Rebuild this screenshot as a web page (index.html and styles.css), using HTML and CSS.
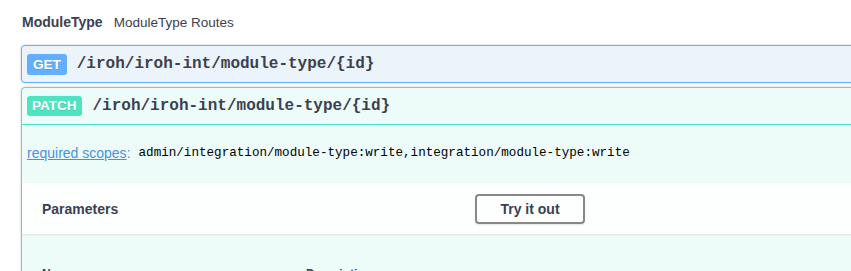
FILE: index.html
```html
<!DOCTYPE html>
<html>
<head>
<meta charset="utf-8">
<link rel="stylesheet" href="styles.css">
</head>
<body>
<div class="page">
  <h3 class="tag"><span class="tag-name">ModuleType</span><span class="tag-desc">ModuleType Routes</span></h3>
  <div class="opblock opblock-get">
    <div class="summary">
      <span class="method">GET</span>
      <span class="path">/iroh/iroh-int/module-type/{id}</span>
    </div>
  </div>
  <div class="opblock opblock-patch">
    <div class="summary summary-open">
      <span class="method">PATCH</span>
      <span class="path">/iroh/iroh-int/module-type/{id}</span>
    </div>
    <div class="scopes">
      <a class="scopes-link" href="#">required scopes</a><span class="colon">:</span>
      <code class="scopes-list">admin/integration/module-type:write,integration/module-type:write</code>
    </div>
    <div class="section-header">
      <h4 class="section-title">Parameters</h4>
      <button class="try-out">Try it out</button>
    </div>
    <div class="params">
      <div class="col-name">Name</div>
      <div class="col-desc">Description</div>
    </div>
  </div>
</div>
</body>
</html>
```
FILE: styles.css
```css
html, body {
  margin: 0;
  padding: 0;
  background: #fff;
  overflow: hidden;
}
body {
  font-family: "Liberation Sans", Arial, sans-serif;
  color: #3b4151;
}
.page {
  width: 900px;
  padding-left: 21px;
}
.tag {
  margin: 0;
  padding: 13px 0 0 1px;
  height: 32px;
  box-sizing: border-box;
  font-size: 14px;
  line-height: 18px;
  display: flex;
  align-items: baseline;
}
.tag-name {
  font-weight: bold;
}
.tag-desc {
  font-weight: normal;
  font-size: 13.5px;
  margin-left: 11px;
}
.opblock {
  border-radius: 4px;
  border: 1px solid;
  margin-bottom: 4px;
  box-shadow: 0 0 3px rgba(0,0,0,.19);
}
.opblock-get {
  margin-top: 13px;
  background: #ebf3fb;
  border-color: #61affe;
}
.opblock-patch {
  background: #edfcf9;
  border-color: #50e3c2;
}
.summary {
  display: flex;
  align-items: center;
  height: 36px;
  padding: 0 5px;
}
.summary-open {
  border-bottom: 1px solid #50e3c2;
}
.method {
  font-weight: bold;
  font-size: 13.5px;
  color: #fff;
  height: 21px;
  line-height: 21px;
  padding: 0 6px;
  border-radius: 3px;
  text-shadow: 0 1px 0 rgba(0,0,0,.1);
}
.opblock-get .method {
  background: #61affe;
}
.opblock-patch .method {
  background: #50e3c2;
  height: 20px;
  line-height: 20px;
  padding: 0 5px;
}
.path {
  font-family: "Liberation Mono", "DejaVu Sans Mono", monospace;
  font-weight: bold;
  font-size: 16px;
  margin-left: 10px;
  color: #3b4151;
}
.opblock-patch .path {
  margin-left: 11px;
}
.scopes {
  height: 58px;
  padding: 0 5px;
  display: flex;
  align-items: center;
  padding-bottom: 2px;
  box-sizing: border-box;
}
.scopes-link {
  font-size: 14px;
  color: #4990e2;
  text-decoration: underline;
}
.colon {
  font-size: 14px;
  color: #4990e2;
  margin-right: 8px;
}
.scopes-list {
  font-family: "Liberation Mono", "DejaVu Sans Mono", monospace;
  font-size: 12.6px;
  color: #000;
}
.section-header {
  height: 51px;
  box-sizing: border-box;
  background: rgba(255,255,255,.8);
  box-shadow: 0 1px 2px rgba(0,0,0,.1);
  display: flex;
  align-items: center;
  padding: 0 20px;
}
.section-title {
  margin: 0;
  font-size: 14px;
  font-weight: bold;
  width: 433px;
}
.try-out {
  font-family: "Liberation Sans", Arial, sans-serif;
  font-size: 14px;
  font-weight: bold;
  color: #3b4151;
  background: transparent;
  border: 2px solid #888;
  border-radius: 4px;
  width: 110px;
  height: 30px;
  padding: 0;
  box-shadow: 0 1px 2px rgba(0,0,0,.1);
}
.params {
  display: flex;
  padding: 33px 20px 20px;
  font-size: 12px;
  font-weight: bold;
  height: 80px;
}
.col-name {
  width: 264px;
}
```
